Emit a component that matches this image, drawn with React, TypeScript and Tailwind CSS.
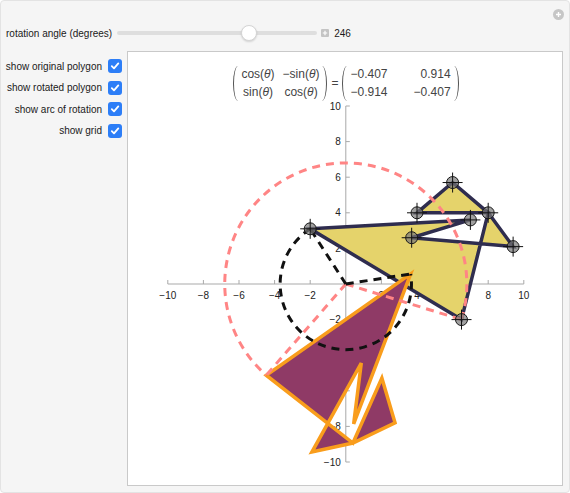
import React from 'react'

// plot geometry (pixels inside the svg)
const S = 17.8
const OX = 217.8
const OY = 184
const px = (x: number) => OX + S * x
const py = (y: number) => OY - S * y

const TH = (246 * Math.PI) / 180
const C = Math.cos(TH)
const SN = Math.sin(TH)
const rot = ([x, y]: number[]) => [C * x - SN * y, SN * x + C * y]

const original: number[][] = [
  [-2, 3.1],
  [7, 3.6],
  [3.7, 2.6],
  [9.4, 2.1],
  [8, 4],
  [6, 5.7],
  [4, 4],
  [8, 4],
  [6.5, -2],
]
const rotated = original.map(rot)
const locators = original.filter((_, i) => i !== 7)

const pts = (list: number[][]) => list.map(([x, y]) => `${px(x)},${py(y)}`).join(' ')

function arcPath(p: number[]) {
  const q = rot(p)
  const r = Math.hypot(p[0], p[1]) * S
  return `M ${px(p[0])} ${py(p[1])} A ${r} ${r} 0 1 0 ${px(q[0])} ${py(q[1])}`
}

const ticks = [-10, -8, -6, -4, -2, 2, 4, 6, 8, 10]
const lbl = (n: number) => (n < 0 ? `\u2212${-n}` : `${n}`)

function Plot() {
  const A = original[0]
  const H = original[8]
  const A2 = rot(A)
  const H2 = rot(H)
  return (
    <svg width="434" height="384" className="block">
      {/* axes */}
      <g stroke="#a9a9a9" strokeWidth="1">
        <line x1={px(-10)} y1={py(0)} x2={px(10)} y2={py(0)} />
        <line x1={px(0)} y1={py(10)} x2={px(0)} y2={py(-10)} />
        {ticks.map(t => (
          <line key={'x' + t} x1={px(t)} y1={py(0)} x2={px(t)} y2={py(0) - 4} />
        ))}
        {ticks.map(t => (
          <line key={'y' + t} x1={px(0)} y1={py(t)} x2={px(0) + 4} y2={py(t)} />
        ))}
      </g>
      <g fill="#222" fontSize="10" fontFamily="'Liberation Sans', Arial, sans-serif">
        {ticks.map(t => (
          <text key={'lx' + t} x={px(t)} y={py(0) + 15} textAnchor="middle">
            {lbl(t)}
          </text>
        ))}
        {ticks.map(t => (
          <text key={'ly' + t} x={px(0) - 5} y={py(t) + 3.5} textAnchor="end">
            {lbl(t)}
          </text>
        ))}
      </g>

      {/* polygons */}
      <polygon
        points={pts(original)}
        fill="#e5d36b"
        stroke="#2f2d4f"
        strokeWidth="3.5"
        strokeLinejoin="miter"
      />
      <polygon
        points={pts(rotated)}
        fill="#8f3a66"
        stroke="#f99d1c"
        strokeWidth="3.5"
        strokeLinejoin="miter"
      />

      {/* arcs of rotation */}
      <g fill="none" strokeWidth="3" strokeDasharray="8 6">
        <g stroke="#ff8585">
          <path d={arcPath(H)} />
          <line x1={px(0)} y1={py(0)} x2={px(H[0])} y2={py(H[1])} />
          <line x1={px(0)} y1={py(0)} x2={px(H2[0])} y2={py(H2[1])} />
        </g>
        <g stroke="#111">
          <path d={arcPath(A)} />
          <line x1={px(0)} y1={py(0)} x2={px(A[0])} y2={py(A[1])} />
          <line x1={px(0)} y1={py(0)} x2={px(A2[0])} y2={py(A2[1])} />
        </g>
      </g>

      {/* locators */}
      {locators.map(([x, y], i) => (
        <g key={i}>
          <circle cx={px(x)} cy={py(y)} r="6" fill="rgba(120,120,120,0.7)" stroke="#1a1a1a" strokeWidth="1" />
          <line x1={px(x) - 10} y1={py(y)} x2={px(x) + 10} y2={py(y)} stroke="#111" strokeWidth="1" />
          <line x1={px(x)} y1={py(y) - 10} x2={px(x)} y2={py(y) + 10} stroke="#111" strokeWidth="1" />
        </g>
      ))}
    </svg>
  )
}

function Paren({ right }: { right?: boolean }) {
  return (
    <div
      className={
        right
          ? 'w-[5px] h-[35px] border-r border-[#555] rounded-tr-[100%_50%] rounded-br-[100%_50%]'
          : 'w-[5px] h-[35px] border-l border-[#555] rounded-tl-[100%_50%] rounded-bl-[100%_50%]'
      }
    />
  )
}

const T = () => <i>θ</i>

function Matrix() {
  return (
    <div className="h-[48px] flex items-center justify-center pl-[2px] pt-[14px] text-[12px] text-[#444] leading-[17px]">
      <Paren />
      <div className="grid grid-cols-[auto_auto] gap-x-[8px] gap-y-[1px] px-[3px] text-center">
        <span>cos(<T />)</span>
        <span>−sin(<T />)</span>
        <span>sin(<T />)</span>
        <span>cos(<T />)</span>
      </div>
      <Paren right />
      <span className="mx-[4px]">=</span>
      <Paren />
      <div className="grid grid-cols-[auto_auto] gap-x-[26px] gap-y-[1px] px-[3px] text-right">
        <span>−0.407</span>
        <span>0.914</span>
        <span>−0.914</span>
        <span>−0.407</span>
      </div>
      <Paren right />
    </div>
  )
}

function Check({ label }: { label: string }) {
  return (
    <div className="h-[14px] flex items-center gap-[6px]">
      <span>{label}</span>
      <span className="w-[14px] h-[14px] rounded-[3px] bg-[#2d7ef7] flex items-center justify-center">
        <svg width="10" height="10" viewBox="0 0 10 10">
          <path d="M1.8 5.2 L4 7.4 L8.3 2.4" fill="none" stroke="white" strokeWidth="1.8" strokeLinecap="round" strokeLinejoin="round" />
        </svg>
      </span>
    </div>
  )
}

export default function App() {
  return (
    <div className="relative w-[570px] h-[493px] bg-[#f5f5f5] border border-[#e3e3e3] rounded-[4px] font-['Liberation_Sans',Arial,sans-serif] text-[10px] text-[#1a1a1a] overflow-hidden">
      {/* options button */}
      <div className="absolute right-[5px] top-[8px] w-[11px] h-[11px] rounded-full bg-[#c6c6c6] flex items-center justify-center">
        <svg width="7" height="7" viewBox="0 0 7 7">
          <path d="M3.5 1 V6 M1 3.5 H6" stroke="white" strokeWidth="1.4" />
        </svg>
      </div>

      {/* slider row */}
      <div className="flex items-center h-[16px] mt-[24px] pl-[5px]">
        <span>rotation angle (degrees)</span>
        <div className="relative ml-[5px] w-[200px] h-[4px] rounded-full bg-[#dedede]">
          <div className="absolute left-[132px] top-[-6px] -ml-[8px] w-[16px] h-[16px] rounded-full bg-white border border-[#d4d4d4] shadow-[0_1px_2px_rgba(0,0,0,0.15)]" />
        </div>
        <span className="ml-[4px] w-[8px] h-[8px] rounded-[1px] bg-[#c4c4c4] flex items-center justify-center">
          <svg width="6" height="6" viewBox="0 0 6 6">
            <path d="M3 0.8 V5.2 M0.8 3 H5.2" stroke="white" strokeWidth="1.2" />
          </svg>
        </span>
        <span className="ml-[5px]">246</span>
      </div>

      {/* body */}
      <div className="flex mt-[10px]">
        <div className="w-[126px] pr-[5px] pt-[8px] flex flex-col items-end gap-[7.5px]">
          <Check label="show original polygon" />
          <Check label="show rotated polygon" />
          <Check label="show arc of rotation" />
          <Check label="show grid" />
        </div>
        <div className="w-[436px] h-[435px] border border-[#c9c9c9] bg-white flex flex-col">
          <Matrix />
          <Plot />
        </div>
      </div>
    </div>
  )
}
